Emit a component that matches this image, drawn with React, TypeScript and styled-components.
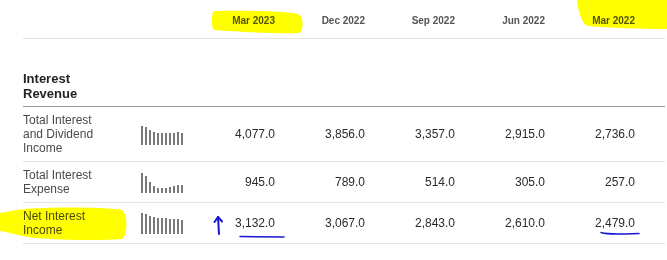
import React from "react";
import styled, { createGlobalStyle } from "styled-components";

const Global = createGlobalStyle`
  html, body { margin: 0; padding: 0; background: #ffffff; }
  body { font-family: "Liberation Sans", Arial, sans-serif; }
`;

const Page = styled.div`
  position: relative;
  width: 667px;
  height: 260px;
  overflow: hidden;
  background: #fff;
`;

const Table = styled.div`
  margin-left: 23px;
  width: 642px;
`;

const GridRow = styled.div`
  display: grid;
  grid-template-columns: 117px 45px repeat(5, 90px) 30px;
  align-items: center;
`;

const HeaderRow = styled(GridRow)`
  height: 39px;
  border-bottom: 1px solid #e3e3e3;
  box-sizing: border-box;
  padding-top: 3px;
`;

const HeadCell = styled.div`
  text-align: right;
  font-size: 10px;
  font-weight: bold;
  color: #555;
  line-height: 12px;
`;

const SectionRow = styled(GridRow)`
  padding: 32px 0 5px;
  border-bottom: 1px solid #9a9a9a;
`;

const SectionTitle = styled.div`
  font-size: 13px;
  font-weight: bold;
  color: #222;
  line-height: 15px;
  width: 80px;
`;

const DataRow = styled(GridRow)`
  padding: 6px 0;
  border-bottom: 1px solid #e3e3e3;
`;

const Label = styled.div`
  font-size: 12px;
  line-height: 14px;
  color: #4a4a4a;
  width: 86px;
`;

const Value = styled.div`
  text-align: right;
  font-size: 12px;
  color: #2a2a2a;
  line-height: 14px;
`;

const Spark = styled.div`
  display: flex;
  align-items: flex-end;
  gap: 2px;
  height: 21px;
  margin-left: 1px;
`;

const Bar = styled.div<{ $h: number }>`
  width: 2px;
  height: ${(p) => p.$h}px;
  background: #7a7a7a;
`;

const Overlay = styled.svg`
  position: absolute;
  top: 0;
  left: 0;
  pointer-events: none;
`;

const YellowLayer = styled.g`
  mix-blend-mode: multiply;
`;

const headers = ["Mar 2023", "Dec 2022", "Sep 2022", "Jun 2022", "Mar 2022"];

const rows = [
  {
    label: "Total Interest and Dividend Income",
    bars: [19, 18, 15, 13, 12, 12, 12, 12, 12, 13, 12],
    values: ["4,077.0", "3,856.0", "3,357.0", "2,915.0", "2,736.0"],
  },
  {
    label: "Total Interest Expense",
    bars: [20, 17, 11, 7, 5, 5, 5, 6, 7, 8, 8],
    values: ["945.0", "789.0", "514.0", "305.0", "257.0"],
  },
  {
    label: "Net Interest Income",
    bars: [21, 20, 18, 17, 16, 16, 16, 15, 15, 15, 14],
    values: ["3,132.0", "3,067.0", "2,843.0", "2,610.0", "2,479.0"],
  },
];

export default function App() {
  return (
    <Page>
      <Global />
      <Table>
        <HeaderRow>
          <div />
          <div />
          {headers.map((h) => (
            <HeadCell key={h}>{h}</HeadCell>
          ))}
          <div />
        </HeaderRow>
        <SectionRow>
          <SectionTitle>Interest Revenue</SectionTitle>
        </SectionRow>
        {rows.map((r) => (
          <DataRow key={r.label}>
            <Label>{r.label}</Label>
            <Spark>
              {r.bars.map((b, i) => (
                <Bar key={i} $h={b} />
              ))}
            </Spark>
            {r.values.map((v, i) => (
              <Value key={i}>{v}</Value>
            ))}
            <div />
          </DataRow>
        ))}
      </Table>
      <Overlay width="667" height="260" viewBox="0 0 667 260">
        <YellowLayer fill="#ffff00">
          <path d="M214 11 C240 10 280 11 298 14 C304 16 304 31 299 33 C280 34 240 32 214 30 C211 28 211 13 214 11 Z" />
          <path d="M577 0 L667 0 L667 29 C640 29 610 28 588 26 C582 24 580 14 578 8 Z" />
          <path d="M0 213 C10 211 25 208 45 208 C80 207 110 208 122 210 C128 214 128 236 122 239 C100 241 60 240 35 238 C20 236 8 232 0 231 Z" />
        </YellowLayer>
        <g fill="none" stroke="#1616d4" strokeLinecap="round" strokeLinejoin="round">
          <path d="M218 217 L219 234" strokeWidth="2" />
          <path d="M214.5 222 L218 217 L222 221.5" strokeWidth="2" />
          <path d="M240 236.5 L284 237" strokeWidth="1.5" />
          <path d="M601 232.5 C604 233.5 610 234 618 234 C628 234 634 233.5 639 233.5" strokeWidth="1.5" />
        </g>
      </Overlay>
    </Page>
  );
}
